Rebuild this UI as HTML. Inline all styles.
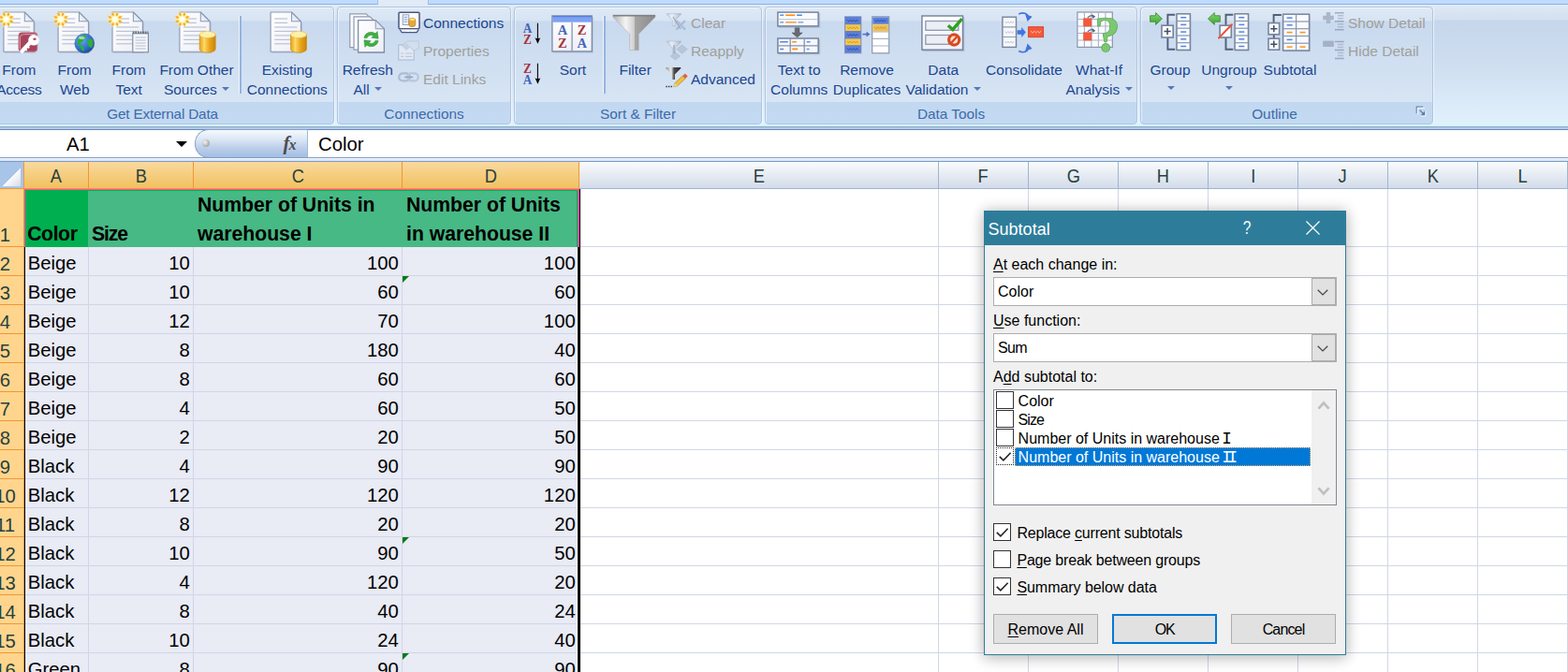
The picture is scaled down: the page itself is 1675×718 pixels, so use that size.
<!DOCTYPE html>
<html lang="en">
<head>
<meta charset="utf-8">
<title>Subtotal</title>
<style>
html,body{margin:0;padding:0;background:#fff;}
body{width:1675px;height:718px;overflow:hidden;font-family:"Liberation Sans",sans-serif;}
#app{position:relative;width:1675px;height:718px;overflow:hidden;background:#fff;}
#app div,#app span,#app i,#app b,#app svg{position:absolute;box-sizing:border-box;}
#app u{text-decoration:underline;text-underline-offset:1.6px;text-decoration-thickness:1px;}
/* ---------- ribbon ---------- */
#tabstrip{left:0;top:0;width:1675px;height:5px;background:#bfdbff;border-bottom:1px solid #8db2e3;}
#tabact{left:403px;top:0;width:55px;height:5px;background:#e1eaf6;border-left:1px solid #9fbde6;border-right:1px solid #9fbde6;}
#ribbon{left:0;top:5px;width:1675px;height:129px;background:linear-gradient(#e0ebf8 0,#dbe6f4 5px,#d4e0f0 16px,#c6d6eb 17px,#cfdef0 65px,#e1f2fd 129px);}
#ribline{left:0;top:134px;width:1675px;height:5px;background:linear-gradient(#c3ffff 0,#c3ffff 1px,#94a8c7 1px,#94a8c7 2px,#afc6e6 2px,#b4caea 4px,#678cb8 4px,#678cb8 5px);}
.grp{top:7px;height:126px;border:1px solid #b0c5e2;border-radius:4px;background:linear-gradient(#dfe9f6 0,#d8e4f3 14px,#c9d9ee 15px,#d7e5f4 101px,#c1d8f0 101px,#c3daf2 124px);box-shadow:inset 1px 1px 0 rgba(255,255,255,.55),1px 0 0 rgba(255,255,255,.6);}
.grp .gl{left:0;right:0;top:103.6px;height:20px;line-height:20px;text-align:center;font-size:15.35px;color:#3e6aaa;white-space:nowrap;}
.rt{font-size:15.5px;color:#1c4690;white-space:nowrap;line-height:21px;text-align:center;}
.rt.dis{color:#a0a09a;}
.tri7{width:0;height:0;border-left:4px solid transparent;border-right:4px solid transparent;border-top:4.5px solid #5878b4;}
.vsep{width:3px;background:linear-gradient(90deg,rgba(255,255,255,.7) 0,rgba(255,255,255,.7) 1px,#8fb0de 1px,#9ab8e2 3px);}
/* ---------- formula bar ---------- */
#fbar{left:0;top:139px;width:1675px;height:29px;background:#fff;}
#fbline{left:0;top:168px;width:1675px;height:5px;background:linear-gradient(#7f9dc6 0,#7f9dc6 1px,#f6f9fe 1px,#f6f9fe 2px,#d9e6f8 2px,#d9e6f8 4px,#7d9bc4 4px);}
.ft{font-size:20.3px;color:#000;line-height:29px;white-space:nowrap;}
/* ---------- grid ---------- */
#grid{left:0;top:0;width:1675px;height:718px;}
.corner{left:0;top:173px;width:26px;height:29px;background:#a9c4e9;border-right:1px solid #f29536;border-bottom:1px solid #f29536;}
.corner i{left:2px;top:6px;width:20px;height:20px;background:linear-gradient(135deg,transparent 50%,#fbfcfe 50%,#d5dbe6 100%);}
.ch{top:173px;height:29px;background:linear-gradient(#f9fcfd,#d3dbe9);border-right:1px solid #9eb6ce;border-bottom:1px solid #9eb6ce;font-size:20.3px;line-height:29px;padding-top:1px;text-align:center;color:#27413e;}
.ch b{position:static !important;display:inline-block;font-weight:normal;transform:scaleX(.9);}
.ch.sel{background:linear-gradient(#f9d99f,#f1c15f);border-right:1px solid #f29536;border-bottom:1px solid #f29536;}
.rh{left:-13px;width:39px;background:#ffd58d;border-right:1px solid #f29536;border-bottom:1px solid #f29536;color:#27413e;font-size:20.3px;}
.rh span{left:0;right:1px;bottom:-2.5px;line-height:29px;text-align:center;}
.vl{top:202px;width:1px;height:516px;background:#d0d7e5;}
.hl{left:619px;width:1056px;height:1px;background:#d0d7e5;}
.selblk{left:27px;top:264px;width:589px;height:454px;background:#e9ebf5;}
.hbase{left:27px;top:203px;width:590px;height:61px;background:#00b050;}
.hc{top:204px;height:60px;background:#47b985;font-weight:bold;font-size:21.2px;color:#000;}
.hc span{left:5px;bottom:-1px;line-height:31px;white-space:nowrap;}
.hc.a1{left:27px;width:67px;background:#00b050;}
.hc.b1{left:94px;width:112px;}
.hc.c1{left:206px;width:223px;}
.hc.d1{left:429px;width:187px;}
.hc.a1 span{letter-spacing:-.4px;left:2.2px;}
.hc.b1 span{letter-spacing:-1.1px;left:4px;}
.svl{top:264px;width:1px;height:454px;background:#d1d6e6;}
.shl{left:27px;width:589px;height:1px;background:#d1d6e6;}
.c{height:31px;line-height:31px;font-size:20.3px;color:#000;white-space:nowrap;padding-top:2px;}
.c.l{text-align:left;padding-left:2.7px;}
.c.r{text-align:right;padding-right:3.2px;}
.tri{left:430px;width:0;height:0;border-right:7.5px solid transparent;border-top:7.5px solid #007a14;}
.selb.l{left:26px;top:202px;width:1px;height:516px;background:linear-gradient(#ff4fa8 0,#ff4fa8 62px,#000 62px);}
.selb.r{left:617px;top:202px;width:2px;height:516px;background:linear-gradient(#ff4fa8 0,#ff4fa8 62px,#000 62px);}
.selb.r2{left:619px;top:202px;width:1px;height:516px;background:#000;}
.selb.t{left:26px;top:202px;width:593px;height:1px;background:#ff4fa8;}
/* ---------- dialog ---------- */
#dlg{left:1051px;top:225px;width:387px;height:475px;background:#f0f0f0;border:1px solid #2d7d9a;box-shadow:0 0 13px 1px rgba(0,0,0,.2),0 5px 16px rgba(0,0,0,.13);font-size:16px;color:#000;}
#dlg .tb{left:0;top:0;width:385px;height:36px;background:#2d7d9a;}
#dlg .tt{left:3.6px;top:6px;font-size:18px;line-height:26px;color:#fff;white-space:nowrap;}
#dlg .lbl{left:9px;line-height:20px;white-space:nowrap;}
#dlg .combo{left:9px;width:367px;height:31px;background:#fff;border:1px solid #adadad;}
#dlg .combo span{left:4px;top:5px;line-height:20px;}
#dlg .combo .btn{right:0;top:0;width:26px;height:29px;background:#e1e1e1;border:1px solid #adadad;}
#dlg .list{left:9px;top:190px;width:367px;height:124px;background:#fff;border:1px solid #828790;}
#dlg .sb{right:0;top:0;width:26px;height:122px;background:#f0f0f0;}
#dlg .cb{width:19px;height:19px;background:#fff;border:1px solid #333;}
#dlg .li{left:25.6px;line-height:20px;height:20px;white-space:nowrap;}
#dlg .ck{left:34.4px;line-height:20px;white-space:nowrap;}
#dlg .bt{top:430px;width:112px;height:32px;background:#e1e1e1;border:1px solid #adadad;text-align:center;line-height:31.6px;}
.rt.lb{top:64px;width:200px;}
.rt.sm{text-align:left;}
#app .tri7.in{position:relative;display:inline-block;top:-4px;margin-left:1px;}
#dlg .q{left:273.2px;top:4.4px;width:14px;text-align:center;font-size:20.5px;line-height:26px;color:#f4f8fa;transform:scaleX(.76);}
#dlg .selrow{left:22px;top:61px;width:316px;height:20px;background:#0078d7;border:1px dotted #f0b060;}
#dlg .cb.foc{border:1px dotted #222;}
#dlg .bt.ok{border:2px solid #0078d7;line-height:29.6px;}
.rt em{font-style:normal;letter-spacing:-.3px;}
#dlg .si{font-style:normal;font-family:'Liberation Mono',monospace;font-size:17.6px;line-height:1px;letter-spacing:-4.2px;margin-left:-2px;}

</style>
</head>
<body>
<div id="app">
<div id="tabstrip"></div>
<div id="tabact"></div>
<div id="ribbon"></div>
<div id="ribline"></div>
<div class="grp" style="left:-20px;width:377px"><div class="gl" style="left:20px;right:10px;letter-spacing:-.2px">Get External Data</div></div>
<div class="grp" style="left:360px;width:186px"><div class="gl">Connections</div></div>
<div class="grp" style="left:549px;width:265px"><div class="gl">Sort &amp; Filter</div></div>
<div class="grp" style="left:817px;width:398px"><div class="gl">Data Tools</div></div>
<div class="grp" style="left:1218px;width:313px"><div class="gl" style="right:26px">Outline</div></div>
<!-- large button labels -->
<div class="rt lb" style="left:-79.6px">From<br><em>Access</em></div>
<div class="rt lb" style="left:-20.3px">From<br>Web</div>
<div class="rt lb" style="left:37.7px">From<br>Text</div>
<div class="rt lb" style="left:110px">From Other<br>Sources <i class="tri7 in"></i></div>
<div class="rt lb" style="left:206.8px">Existing<br>Connections</div>
<div class="rt lb" style="left:292.8px">Refresh<br>All <i class="tri7 in"></i></div>
<div class="rt lb" style="left:511.9px">Sort</div>
<div class="rt lb" style="left:578.7px">Filter</div>
<div class="rt lb" style="left:753.7px">Text to<br>Columns</div>
<div class="rt lb" style="left:826px">Remove<br>Duplicates</div>
<div class="rt lb" style="left:907.7px">Data<br>Validation <i class="tri7 in"></i></div>
<div class="rt lb" style="left:994px">Consolidate</div>
<div class="rt lb" style="left:1074px">What-If<br>Analysis <i class="tri7 in"></i></div>
<div class="rt lb" style="left:1150px">Group</div>
<div class="rt lb" style="left:1213px">Ungroup</div>
<div class="rt lb" style="left:1278px">Subtotal</div>
<i class="tri7" style="left:1246.6px;top:91.6px"></i>
<i class="tri7" style="left:1308.6px;top:91.6px"></i>
<!-- small button labels -->
<div class="rt sm" style="left:452px;top:14px">Connections</div>
<div class="rt sm dis" style="left:452px;top:44px">Properties</div>
<div class="rt sm dis" style="left:452px;top:74px">Edit Links</div>
<div class="rt sm dis" style="left:738px;top:14px">Clear</div>
<div class="rt sm dis" style="left:738px;top:44px">Reapply</div>
<div class="rt sm" style="left:738px;top:74px">Advanced</div>
<div class="rt sm dis" style="left:1440px;top:14px">Show Detail</div>
<div class="rt sm dis" style="left:1440px;top:44px">Hide Detail</div>
<div class="vsep" style="left:255px;top:17px;height:83px"></div>
<div class="vsep" style="left:644px;top:17px;height:83px"></div>

<svg id="icons" width="1675" height="139" viewBox="0 0 1675 139" style="left:0;top:0">
<defs>
<linearGradient id="gdoc" x1="0" y1="0" x2="1" y2="1"><stop offset="0" stop-color="#ffffff"/><stop offset="1" stop-color="#ebeef6"/></linearGradient>
<linearGradient id="gfold" x1="0" y1="1" x2="1" y2="0"><stop offset="0" stop-color="#f4f8fd"/><stop offset="1" stop-color="#c3d4ee"/></linearGradient>
<linearGradient id="gcell" x1="0" y1="0" x2="0" y2="1"><stop offset="0" stop-color="#ffffff"/><stop offset="1" stop-color="#eef0f6"/></linearGradient>
<radialGradient id="gstar2"><stop offset="0" stop-color="#ffffff"/><stop offset=".4" stop-color="#fff4a0"/><stop offset="1" stop-color="#ffdf70"/></radialGradient>
<radialGradient id="gstar"><stop offset="0" stop-color="#ffffe8"/><stop offset=".5" stop-color="#fff29a" stop-opacity=".8"/><stop offset="1" stop-color="#ffe680" stop-opacity="0"/></radialGradient>
<linearGradient id="gcyl" x1="0" y1="0" x2="1" y2="0"><stop offset="0" stop-color="#e9a21a"/><stop offset=".3" stop-color="#fbd860"/><stop offset=".6" stop-color="#eaa820"/><stop offset="1" stop-color="#c98408"/></linearGradient>
<radialGradient id="gglobe" cx=".35" cy=".3" r=".8"><stop offset="0" stop-color="#6fa8f0"/><stop offset=".6" stop-color="#2f6fd0"/><stop offset="1" stop-color="#1f3f8a"/></radialGradient>
<linearGradient id="ggrn" x1="0" y1="0" x2="0" y2="1"><stop offset="0" stop-color="#8ad678"/><stop offset=".5" stop-color="#5fbf50"/><stop offset="1" stop-color="#3f9f38"/></linearGradient>
<linearGradient id="gfun" x1="0" y1="0" x2="1" y2="0"><stop offset="0" stop-color="#b4b4b4"/><stop offset=".3" stop-color="#f4f4f4"/><stop offset=".5" stop-color="#cfcfcf"/><stop offset=".52" stop-color="#a6a6a6"/><stop offset="1" stop-color="#8a8a8a"/></linearGradient>
<linearGradient id="gfunl" x1="0" y1="0" x2="1" y2="0"><stop offset="0" stop-color="#b8c6da"/><stop offset=".35" stop-color="#eef3fa"/><stop offset="1" stop-color="#9fb0c8"/></linearGradient>
<linearGradient id="gfund" x1="0" y1="0" x2="1" y2="0"><stop offset="0" stop-color="#8c8c8c"/><stop offset=".35" stop-color="#f0f0f0"/><stop offset=".55" stop-color="#4a4a4a"/><stop offset="1" stop-color="#2a2a2a"/></linearGradient>
</defs>
<g transform="translate(3.3,12.4)"><path d="M1.5,1.8 H24 L34.6,12 V44.6 H1.5 Z" fill="#5b6b88" opacity=".18"/><path d="M.6,.6 H23 L33,10.4 V42.8 H.6 Z" fill="url(#gdoc)" stroke="#8e99b1" stroke-width="1.15" stroke-linejoin="round"/><path d="M23,.8 V10.4 H32.8 Z" fill="url(#gfold)" stroke="#8e99b1" stroke-width="1.05" stroke-linejoin="round"/><path d="M4.8,7.6 H18.6" stroke="#bcc2d3" stroke-width="1.2"/><path d="M4.8,12 H18.6" stroke="#bcc2d3" stroke-width="1.2"/><path d="M4.8,16.6 H28.8" stroke="#bcc2d3" stroke-width="1.2"/><path d="M4.8,21 H28.8" stroke="#bcc2d3" stroke-width="1.2"/><path d="M4.8,25.5 H28.8" stroke="#bcc2d3" stroke-width="1.2"/><path d="M4.8,30 H28.8" stroke="#bcc2d3" stroke-width="1.2"/><path d="M4.8,34.4 H28.8" stroke="#bcc2d3" stroke-width="1.2"/></g><g transform="translate(6.699999999999999,20.6)"><circle r="8.6" fill="url(#gstar)"/><polygon points="3.75,-9.05 3.25,-3.25 9.05,-3.75 4.60,-0.00 9.05,3.75 3.25,3.25 3.75,9.05 0.00,4.60 -3.75,9.05 -3.25,3.25 -9.05,3.75 -4.60,0.00 -9.05,-3.75 -3.25,-3.25 -3.75,-9.05 -0.00,-4.60" fill="url(#gstar2)"/><path d="M0,-3.6 L1.35,-5.6 L0,-8 L-1.35,-5.6 Z" fill="#f0a020" opacity=".9" transform="rotate(22.5)"/><path d="M0,-3.6 L1.35,-5.6 L0,-8 L-1.35,-5.6 Z" fill="#f0a020" opacity=".9" transform="rotate(67.5)"/><path d="M0,-3.6 L1.35,-5.6 L0,-8 L-1.35,-5.6 Z" fill="#f0a020" opacity=".9" transform="rotate(112.5)"/><path d="M0,-3.6 L1.35,-5.6 L0,-8 L-1.35,-5.6 Z" fill="#f0a020" opacity=".9" transform="rotate(157.5)"/><path d="M0,-3.6 L1.35,-5.6 L0,-8 L-1.35,-5.6 Z" fill="#f0a020" opacity=".9" transform="rotate(202.5)"/><path d="M0,-3.6 L1.35,-5.6 L0,-8 L-1.35,-5.6 Z" fill="#f0a020" opacity=".9" transform="rotate(247.5)"/><path d="M0,-3.6 L1.35,-5.6 L0,-8 L-1.35,-5.6 Z" fill="#f0a020" opacity=".9" transform="rotate(292.5)"/><path d="M0,-3.6 L1.35,-5.6 L0,-8 L-1.35,-5.6 Z" fill="#f0a020" opacity=".9" transform="rotate(337.5)"/><circle r="2.8" fill="#fffef0" opacity=".95"/></g>
<g transform="translate(19.4,34.2)"><rect x=".5" y=".5" width="20" height="20.5" rx="3" fill="#a8425b" stroke="#c98a9a" stroke-width=".8"/><path d="M2,18 V6 Q2,2.5 6,2.5 H19" fill="none" stroke="#d8a0ae" stroke-width="1"/><path d="M4,20.5 L13.5,10.5" stroke="#fff" stroke-width="4.2" stroke-linecap="round"/><path d="M7,17.5 l2.3,2.3 M9.6,15 l2.2,2.2" stroke="#fff" stroke-width="1.8"/><circle cx="16.6" cy="8.6" r="5.8" fill="#fff"/><ellipse cx="17.6" cy="7.6" rx="1.7" ry="1.2" fill="#b04a62"/></g>
<g transform="translate(61.5,12.4)"><path d="M1.5,1.8 H24 L34.6,12 V44.6 H1.5 Z" fill="#5b6b88" opacity=".18"/><path d="M.6,.6 H23 L33,10.4 V42.8 H.6 Z" fill="url(#gdoc)" stroke="#8e99b1" stroke-width="1.15" stroke-linejoin="round"/><path d="M23,.8 V10.4 H32.8 Z" fill="url(#gfold)" stroke="#8e99b1" stroke-width="1.05" stroke-linejoin="round"/><path d="M4.8,7.6 H18.6" stroke="#bcc2d3" stroke-width="1.2"/><path d="M4.8,12 H18.6" stroke="#bcc2d3" stroke-width="1.2"/><path d="M4.8,16.6 H28.8" stroke="#bcc2d3" stroke-width="1.2"/><path d="M4.8,21 H28.8" stroke="#bcc2d3" stroke-width="1.2"/><path d="M4.8,25.5 H28.8" stroke="#bcc2d3" stroke-width="1.2"/><path d="M4.8,30 H28.8" stroke="#bcc2d3" stroke-width="1.2"/><path d="M4.8,34.4 H28.8" stroke="#bcc2d3" stroke-width="1.2"/></g><g transform="translate(64.9,20.6)"><circle r="8.6" fill="url(#gstar)"/><polygon points="3.75,-9.05 3.25,-3.25 9.05,-3.75 4.60,-0.00 9.05,3.75 3.25,3.25 3.75,9.05 0.00,4.60 -3.75,9.05 -3.25,3.25 -9.05,3.75 -4.60,0.00 -9.05,-3.75 -3.25,-3.25 -3.75,-9.05 -0.00,-4.60" fill="url(#gstar2)"/><path d="M0,-3.6 L1.35,-5.6 L0,-8 L-1.35,-5.6 Z" fill="#f0a020" opacity=".9" transform="rotate(22.5)"/><path d="M0,-3.6 L1.35,-5.6 L0,-8 L-1.35,-5.6 Z" fill="#f0a020" opacity=".9" transform="rotate(67.5)"/><path d="M0,-3.6 L1.35,-5.6 L0,-8 L-1.35,-5.6 Z" fill="#f0a020" opacity=".9" transform="rotate(112.5)"/><path d="M0,-3.6 L1.35,-5.6 L0,-8 L-1.35,-5.6 Z" fill="#f0a020" opacity=".9" transform="rotate(157.5)"/><path d="M0,-3.6 L1.35,-5.6 L0,-8 L-1.35,-5.6 Z" fill="#f0a020" opacity=".9" transform="rotate(202.5)"/><path d="M0,-3.6 L1.35,-5.6 L0,-8 L-1.35,-5.6 Z" fill="#f0a020" opacity=".9" transform="rotate(247.5)"/><path d="M0,-3.6 L1.35,-5.6 L0,-8 L-1.35,-5.6 Z" fill="#f0a020" opacity=".9" transform="rotate(292.5)"/><path d="M0,-3.6 L1.35,-5.6 L0,-8 L-1.35,-5.6 Z" fill="#f0a020" opacity=".9" transform="rotate(337.5)"/><circle r="2.8" fill="#fffef0" opacity=".95"/></g>
<g transform="translate(90.3,46.4)"><circle r="10.4" fill="url(#gglobe)" stroke="#3a5a9a" stroke-width=".6"/><path d="M-7,-5 Q-4,-9 1,-9.5 Q3,-7 0,-5 Q-1,-2 -4,-1 Q-5,2 -2,3 Q1,5 -1,8.5 Q-4,7 -5,3 Q-9,1 -7,-5 Z" fill="#2fae3a"/><path d="M3,-3 Q6,-6 8.5,-4 Q10,0 8,4 Q5,5 4,2 Q2,0 3,-3 Z" fill="#2fae3a"/><ellipse cx="-3" cy="-6" rx="3.2" ry="1.6" fill="#fff" opacity=".55"/></g>
<g transform="translate(119.4,12.4)"><path d="M1.5,1.8 H24 L34.6,12 V44.6 H1.5 Z" fill="#5b6b88" opacity=".18"/><path d="M.6,.6 H23 L33,10.4 V42.8 H.6 Z" fill="url(#gdoc)" stroke="#8e99b1" stroke-width="1.15" stroke-linejoin="round"/><path d="M23,.8 V10.4 H32.8 Z" fill="url(#gfold)" stroke="#8e99b1" stroke-width="1.05" stroke-linejoin="round"/><path d="M4.8,7.6 H18.6" stroke="#bcc2d3" stroke-width="1.2"/><path d="M4.8,12 H18.6" stroke="#bcc2d3" stroke-width="1.2"/><path d="M4.8,16.6 H28.8" stroke="#bcc2d3" stroke-width="1.2"/><path d="M4.8,21 H28.8" stroke="#bcc2d3" stroke-width="1.2"/><path d="M4.8,25.5 H28.8" stroke="#bcc2d3" stroke-width="1.2"/><path d="M4.8,30 H28.8" stroke="#bcc2d3" stroke-width="1.2"/><path d="M4.8,34.4 H28.8" stroke="#bcc2d3" stroke-width="1.2"/></g><g transform="translate(122.80000000000001,20.6)"><circle r="8.6" fill="url(#gstar)"/><polygon points="3.75,-9.05 3.25,-3.25 9.05,-3.75 4.60,-0.00 9.05,3.75 3.25,3.25 3.75,9.05 0.00,4.60 -3.75,9.05 -3.25,3.25 -9.05,3.75 -4.60,0.00 -9.05,-3.75 -3.25,-3.25 -3.75,-9.05 -0.00,-4.60" fill="url(#gstar2)"/><path d="M0,-3.6 L1.35,-5.6 L0,-8 L-1.35,-5.6 Z" fill="#f0a020" opacity=".9" transform="rotate(22.5)"/><path d="M0,-3.6 L1.35,-5.6 L0,-8 L-1.35,-5.6 Z" fill="#f0a020" opacity=".9" transform="rotate(67.5)"/><path d="M0,-3.6 L1.35,-5.6 L0,-8 L-1.35,-5.6 Z" fill="#f0a020" opacity=".9" transform="rotate(112.5)"/><path d="M0,-3.6 L1.35,-5.6 L0,-8 L-1.35,-5.6 Z" fill="#f0a020" opacity=".9" transform="rotate(157.5)"/><path d="M0,-3.6 L1.35,-5.6 L0,-8 L-1.35,-5.6 Z" fill="#f0a020" opacity=".9" transform="rotate(202.5)"/><path d="M0,-3.6 L1.35,-5.6 L0,-8 L-1.35,-5.6 Z" fill="#f0a020" opacity=".9" transform="rotate(247.5)"/><path d="M0,-3.6 L1.35,-5.6 L0,-8 L-1.35,-5.6 Z" fill="#f0a020" opacity=".9" transform="rotate(292.5)"/><path d="M0,-3.6 L1.35,-5.6 L0,-8 L-1.35,-5.6 Z" fill="#f0a020" opacity=".9" transform="rotate(337.5)"/><circle r="2.8" fill="#fffef0" opacity=".95"/></g>
<g transform="translate(141.2,33)"><rect x=".6" y="2.8" width="16.6" height="20" fill="#f6f8fc" stroke="#8390a8" stroke-width="1.2"/><path d="M.6,1.6 H17.2" stroke="#5d6678" stroke-width="2.2" stroke-dasharray="1.6 1"/><path d="M3.4,7 H14.6" stroke="#b3bacb" stroke-width="1"/><path d="M3.4,10 H14.6" stroke="#b3bacb" stroke-width="1"/><path d="M3.4,13 H14.6" stroke="#b3bacb" stroke-width="1"/><path d="M3.4,16 H14.6" stroke="#b3bacb" stroke-width="1"/><path d="M3.4,19 H14.6" stroke="#b3bacb" stroke-width="1"/></g>
<g transform="translate(191.3,12.4)"><path d="M1.5,1.8 H24 L34.6,12 V44.6 H1.5 Z" fill="#5b6b88" opacity=".18"/><path d="M.6,.6 H23 L33,10.4 V42.8 H.6 Z" fill="url(#gdoc)" stroke="#8e99b1" stroke-width="1.15" stroke-linejoin="round"/><path d="M23,.8 V10.4 H32.8 Z" fill="url(#gfold)" stroke="#8e99b1" stroke-width="1.05" stroke-linejoin="round"/><path d="M4.8,7.6 H18.6" stroke="#bcc2d3" stroke-width="1.2"/><path d="M4.8,12 H18.6" stroke="#bcc2d3" stroke-width="1.2"/><path d="M4.8,16.6 H28.8" stroke="#bcc2d3" stroke-width="1.2"/><path d="M4.8,21 H28.8" stroke="#bcc2d3" stroke-width="1.2"/><path d="M4.8,25.5 H28.8" stroke="#bcc2d3" stroke-width="1.2"/><path d="M4.8,30 H28.8" stroke="#bcc2d3" stroke-width="1.2"/><path d="M4.8,34.4 H28.8" stroke="#bcc2d3" stroke-width="1.2"/></g><g transform="translate(194.70000000000002,20.6)"><circle r="8.6" fill="url(#gstar)"/><polygon points="3.75,-9.05 3.25,-3.25 9.05,-3.75 4.60,-0.00 9.05,3.75 3.25,3.25 3.75,9.05 0.00,4.60 -3.75,9.05 -3.25,3.25 -9.05,3.75 -4.60,0.00 -9.05,-3.75 -3.25,-3.25 -3.75,-9.05 -0.00,-4.60" fill="url(#gstar2)"/><path d="M0,-3.6 L1.35,-5.6 L0,-8 L-1.35,-5.6 Z" fill="#f0a020" opacity=".9" transform="rotate(22.5)"/><path d="M0,-3.6 L1.35,-5.6 L0,-8 L-1.35,-5.6 Z" fill="#f0a020" opacity=".9" transform="rotate(67.5)"/><path d="M0,-3.6 L1.35,-5.6 L0,-8 L-1.35,-5.6 Z" fill="#f0a020" opacity=".9" transform="rotate(112.5)"/><path d="M0,-3.6 L1.35,-5.6 L0,-8 L-1.35,-5.6 Z" fill="#f0a020" opacity=".9" transform="rotate(157.5)"/><path d="M0,-3.6 L1.35,-5.6 L0,-8 L-1.35,-5.6 Z" fill="#f0a020" opacity=".9" transform="rotate(202.5)"/><path d="M0,-3.6 L1.35,-5.6 L0,-8 L-1.35,-5.6 Z" fill="#f0a020" opacity=".9" transform="rotate(247.5)"/><path d="M0,-3.6 L1.35,-5.6 L0,-8 L-1.35,-5.6 Z" fill="#f0a020" opacity=".9" transform="rotate(292.5)"/><path d="M0,-3.6 L1.35,-5.6 L0,-8 L-1.35,-5.6 Z" fill="#f0a020" opacity=".9" transform="rotate(337.5)"/><circle r="2.8" fill="#fffef0" opacity=".95"/></g>
<g transform="translate(212.9,33)"><path d="M.3,4 V19.6 A8.5,3.6 0 0 0 17.3,19.6 V4 Z" fill="url(#gcyl)" stroke="#c98a0c" stroke-width=".6"/><ellipse cx="8.8" cy="4" rx="8.5" ry="3.6" fill="#fdf0a8" stroke="#e9b73a" stroke-width=".6"/><path d="M5,7.5 V22" stroke="#ffe79a" stroke-width="1" stroke-dasharray="1 1" opacity=".8"/></g>
<g transform="translate(288.5,12.4)"><path d="M1.5,1.8 H24 L34.6,12 V44.6 H1.5 Z" fill="#5b6b88" opacity=".18"/><path d="M.6,.6 H23 L33,10.4 V42.8 H.6 Z" fill="url(#gdoc)" stroke="#8e99b1" stroke-width="1.15" stroke-linejoin="round"/><path d="M23,.8 V10.4 H32.8 Z" fill="url(#gfold)" stroke="#8e99b1" stroke-width="1.05" stroke-linejoin="round"/><path d="M4.8,7.6 H18.6" stroke="#bcc2d3" stroke-width="1.2"/><path d="M4.8,12 H18.6" stroke="#bcc2d3" stroke-width="1.2"/><path d="M4.8,16.6 H28.8" stroke="#bcc2d3" stroke-width="1.2"/><path d="M4.8,21 H28.8" stroke="#bcc2d3" stroke-width="1.2"/><path d="M4.8,25.5 H28.8" stroke="#bcc2d3" stroke-width="1.2"/><path d="M4.8,30 H28.8" stroke="#bcc2d3" stroke-width="1.2"/><path d="M4.8,34.4 H28.8" stroke="#bcc2d3" stroke-width="1.2"/></g>
<g transform="translate(310.2,33)"><path d="M.3,4 V19.6 A8.5,3.6 0 0 0 17.3,19.6 V4 Z" fill="url(#gcyl)" stroke="#c98a0c" stroke-width=".6"/><ellipse cx="8.8" cy="4" rx="8.5" ry="3.6" fill="#fdf0a8" stroke="#e9b73a" stroke-width=".6"/><path d="M5,7.5 V22" stroke="#ffe79a" stroke-width="1" stroke-dasharray="1 1" opacity=".8"/></g>
<g transform="translate(373.2,14.2)"><path d="M.6,.6 H18 L24,7 V36.4 H.6 Z" fill="#fafbfe" stroke="#8f9ab2" stroke-width="1.2"/><path d="M4.8,3.6 H22 L30,11 V39 H4.8 Z" fill="#fafbfe" stroke="#8f9ab2" stroke-width="1.2"/><path d="M9.4,7.4 H28 L37.2,16.6 V41.8 H9.4 Z" fill="url(#gdoc)" stroke="#7f8ba4" stroke-width="1.3"/><path d="M28,7.6 V16.6 H37 Z" fill="#dfe8f6" stroke="#8f9ab2" stroke-width="1"/><g transform="translate(23.3,27.6)"><path d="M-7.6,-1.2 A7.6,7.2 0 0 1 4.6,-6 L6.6,-8.2 L7.6,-.6 L.4,-1.6 L2.4,-3.6 A4.6,4.4 0 0 0 -4.4,-1.2 Z" fill="#3fae3f" stroke="#2b8f2e" stroke-width=".5"/><path d="M7.6,1.6 A7.6,7.2 0 0 1 -4.6,6.4 L-6.6,8.6 L-7.6,1 L-.4,2 L-2.4,4 A4.6,4.4 0 0 0 4.4,1.6 Z" fill="#3fae3f" stroke="#2b8f2e" stroke-width=".5"/></g></g>
<g transform="translate(425.2,12.4)"><rect x=".8" y=".8" width="22" height="17.6" rx="1" fill="#fbfcfe" stroke="#4a5680" stroke-width="1.5"/><path d="M2,19.2 L4,22.2 H20 L22,19.2" fill="#e8ecf4" stroke="#4a5680" stroke-width="1.2"/><path d="M9,21 h3 M14,21 h3" stroke="#fff" stroke-width="1.2"/><rect x="5" y="3.4" width="6.6" height="10.6" fill="#eef2fa" stroke="#7d8cb0" stroke-width=".8"/><path d="M6.4,6 h3.6 M6.4,8.4 h3.6 M6.4,10.8 h3.6" stroke="#6f8fd0" stroke-width=".8"/><rect x="11.6" y="7" width="7" height="9" rx="2.4" fill="#e8a838" stroke="#b9781a" stroke-width=".7"/><ellipse cx="15.1" cy="8.4" rx="3" ry="1.2" fill="#fbe08a"/></g>
<g transform="translate(425.2,43)" opacity=".85"><rect x=".6" y="5" width="16.4" height="16" fill="#e6ecf5" stroke="#a9b7cd" stroke-width="1.1"/><path d="M3,14 h3 M8,14 h7 M3,17.4 h3 M8,17.4 h7" stroke="#b7c3d6" stroke-width="1.1"/><path d="M4,6 L10,1 H22 V9 L17,11 L10,5 Z" fill="#d5dfee" stroke="#b3c0d6" stroke-width=".8"/><path d="M5,7 l4,-4 l4,4 l-4,4 z" fill="#c4d0e4"/></g>
<g transform="translate(425.2,77)" opacity=".9"><rect x="1" y="1.4" width="11.6" height="8" rx="4" fill="none" stroke="#aab8cf" stroke-width="2.2"/><rect x="10" y="1.4" width="11.6" height="8" rx="4" fill="none" stroke="#b7c4d8" stroke-width="2.2"/><path d="M7,5.4 h9" stroke="#8fa0bd" stroke-width="1.6"/></g>
<g transform="translate(558.8,24.8)"><text transform="translate(4.7,9.9) scale(1,1.14)" font-family="Liberation Serif,serif" font-weight="bold" font-size="13.2" text-anchor="middle" fill="#4564b8">A</text><text transform="translate(4.7,22) scale(1,1.14)" font-family="Liberation Serif,serif" font-weight="bold" font-size="13.2" text-anchor="middle" fill="#a5323c">Z</text><path d="M15.6,0 V18" stroke="#000" stroke-width="1.1"/><path d="M12.7,15.4 L15.6,22 L18.5,15.4 Q15.6,17.2 12.7,15.4 Z" fill="#000"/></g>
<g transform="translate(558.8,67.8)"><text transform="translate(4.7,9.9) scale(1,1.14)" font-family="Liberation Serif,serif" font-weight="bold" font-size="13.2" text-anchor="middle" fill="#a5323c">Z</text><text transform="translate(4.7,22) scale(1,1.14)" font-family="Liberation Serif,serif" font-weight="bold" font-size="13.2" text-anchor="middle" fill="#4564b8">A</text><path d="M15.6,0 V18" stroke="#000" stroke-width="1.1"/><path d="M12.7,15.4 L15.6,22 L18.5,15.4 Q15.6,17.2 12.7,15.4 Z" fill="#000"/></g>
<g transform="translate(589.3,16.3)"><rect x="1.4" y="1.8" width="43" height="38.4" fill="#5d6b86" opacity=".25"/><rect x=".6" y=".6" width="42.4" height="38" fill="url(#gcell)" stroke="#7b89a6" stroke-width="1.3"/><rect x="1" y="1" width="41.6" height="6.4" fill="#7ea2f2"/><path d="M1,1.4 H42.6" stroke="#4d74d6" stroke-width="1"/><path d="M21.8,7.6 V38.4" stroke="#8d9ab4" stroke-width="1.4"/><text x="11.6" y="20.8" font-family="Liberation Serif,serif" font-weight="bold" font-size="14.5" text-anchor="middle" fill="#4564b8">A</text><text x="11.6" y="34.6" font-family="Liberation Serif,serif" font-weight="bold" font-size="14.5" text-anchor="middle" fill="#a5323c">Z</text><text x="32.4" y="20.8" font-family="Liberation Serif,serif" font-weight="bold" font-size="14.5" text-anchor="middle" fill="#a5323c">Z</text><text x="32.4" y="34.6" font-family="Liberation Serif,serif" font-weight="bold" font-size="14.5" text-anchor="middle" fill="#4564b8">A</text></g>
<g transform="translate(654.9,16)"><path d="M0,0 H45 V2.3 L27.3,20.3 V37.6 H17.7 V20.3 L0,2.3 Z" fill="url(#gfun)" stroke="#8a8a8a" stroke-opacity=".55" stroke-width=".6"/><path d="M0,.8 H45" stroke="#808080" stroke-width="1.6"/></g>
<g transform="translate(712.4,14.6)" opacity=".8"><path d="M0,0 H15 V0.8 L9.0,7.0 V13 H6.0 V7.0 L0,0.8 Z" fill="url(#gfunl)" stroke="#8a8a8a" stroke-opacity=".55" stroke-width=".6"/></g>
<g opacity=".8"><path d="M722.4,22 l9.6,9.6 M732,22 l-9.6,9.6" stroke="#a7b7ce" stroke-width="2.4"/><path d="M719,18 l8,13" stroke="#8fa2be" stroke-width="1.4"/></g>
<g transform="translate(712.4,44)" opacity=".8"><path d="M0,0 H15 V0.8 L9.0,7.0 V13 H6.0 V7.0 L0,0.8 Z" fill="url(#gfunl)" stroke="#8a8a8a" stroke-opacity=".55" stroke-width=".6"/></g>
<g opacity=".85"><path d="M723,52.6 l5.6,-4.6 l5.6,4.6 l-5.6,4.6 z M716.4,60 l5,-4 l5,4 l-5,4 z" fill="#b3c2d8" stroke="#9db0ca" stroke-width=".6"/><path d="M720,48 v9" stroke="#94a6c2" stroke-width="1.6"/></g>
<g transform="translate(711.3,72.1)"><path d="M0,0 H16 V.8 L9.6,7.4 V13 H6.4 V7.4 L0,.8 Z" fill="url(#gfund)"/><path d="M0,20.4 h7" stroke="#333" stroke-width="1.4" stroke-dasharray="1.4 1.2"/><g transform="translate(8.4,20.6) rotate(-43)"><path d="M0,0 L3.4,-2 H15 V2 H3.4 Z" fill="#f2c140" stroke="#a87b1a" stroke-width=".6"/><path d="M0,0 L3.4,-2 V2 Z" fill="#e9d7b0"/><rect x="15" y="-2" width="3.6" height="4" fill="#e0603a"/></g></g>
<g transform="translate(830.2,12.4)"><rect x="1.6" y="1.8" width="44.4" height="15.6" fill="#5d6b86" opacity=".25"/><rect x=".7" y=".7" width="43.2" height="14.8" fill="#fafbfe" stroke="#6e7c96" stroke-width="1.4"/><path d="M1.4,8.2 H43.2" stroke="#c3cad8" stroke-width="1.2"/><path d="M3,3.8 h4" stroke="#3d8bf0" stroke-width="1.4"/><path d="M9,3.8 h10" stroke="#ff8a00" stroke-width="1.5"/><path d="M21,3.8 h5.6" stroke="#3d7be0" stroke-width="1.4"/><path d="M3,11.4 h4" stroke="#6f9cf2" stroke-width="1.5"/><path d="M9,11.4 h11.6" stroke="#f5a04a" stroke-width="1.6"/><path d="M22.4,11.4 h5.6" stroke="#7ea4f2" stroke-width="1.5"/><path d="M19,17.4 H23.8 V22.6 H27 L21.4,27.6 L15.8,22.6 H19 Z" fill="#666b72" stroke="#4c5058" stroke-width=".5"/><rect x="1.6" y="29.6" width="44.4" height="16.4" fill="#5d6b86" opacity=".25"/><rect x=".7" y="28.6" width="43.2" height="15.6" fill="#f6f8fc" stroke="#6e7c96" stroke-width="1.4"/><path d="M1,36.4 H43.6 M14,29 V44 M29,29 V44" stroke="#8693ac" stroke-width="1.3"/><path d="M3,32.4 h8.6 M3,40 h4" stroke="#4f86ee" stroke-width="1.5"/><path d="M16,32.4 h4.6 M16,40 h6" stroke="#ff8f10" stroke-width="1.6"/><path d="M31.4,32.4 h4 M31.4,40 h3" stroke="#5a94f0" stroke-width="1.5"/></g>
<g transform="translate(902.1,17.4)"><rect x=".4" y=".4" width="17.4" height="39" fill="#6a7fc0" stroke="#7a8cc0" stroke-width=".8"/><rect x="1" y="1.2" width="16.2" height="6.8" fill="#5b7fd6"/><path d="M3,3.8 l1.7,2 l1.7,-2 l1.7,2 l1.7,-2 l1.7,2 l1.7,-2 l1.5,2" fill="none" stroke="#2f4fae" stroke-width="1"/><rect x="1" y="8.8" width="16.2" height="6.8" fill="#f3c84e"/><path d="M3,11.4 l1.7,2 l1.7,-2 l1.7,2 l1.7,-2 l1.7,2 l1.7,-2 l1.5,2" fill="none" stroke="#d99a1c" stroke-width="1"/><rect x="1" y="16.4" width="16.2" height="6.8" fill="#5b7fd6"/><path d="M3,19.0 l1.7,2 l1.7,-2 l1.7,2 l1.7,-2 l1.7,2 l1.7,-2 l1.5,2" fill="none" stroke="#2f4fae" stroke-width="1"/><rect x="1" y="24.0" width="16.2" height="6.8" fill="#f3c84e"/><path d="M3,26.6 l1.7,2 l1.7,-2 l1.7,2 l1.7,-2 l1.7,2 l1.7,-2 l1.5,2" fill="none" stroke="#d99a1c" stroke-width="1"/><rect x="1" y="31.6" width="16.2" height="6.8" fill="#5b7fd6"/><path d="M3,34.2 l1.7,2 l1.7,-2 l1.7,2 l1.7,-2 l1.7,2 l1.7,-2 l1.5,2" fill="none" stroke="#2f4fae" stroke-width="1"/><path d="M19.4,19.2 H25" stroke="#4a6fc8" stroke-width="1.6"/><path d="M23.4,16.4 L27.4,19.2 L23.4,22 Z" fill="#4a6fc8"/><rect x="29.6" y=".4" width="18" height="39" fill="#fff" stroke="#8c98b2" stroke-width="1.2"/><rect x="30.2" y="1" width="16.8" height="7.4" fill="#5b7fd6"/><path d="M32.4,3.8 l1.7,2 l1.7,-2 l1.7,2 l1.7,-2 l1.7,2 l1.7,-2 l1.5,2" fill="none" stroke="#2f4fae" stroke-width="1"/><rect x="30.2" y="8.8" width="16.8" height="7.4" fill="#f0bf52"/><path d="M32.4,11.4 l1.7,2 l1.7,-2 l1.7,2 l1.7,-2 l1.7,2 l1.7,-2 l1.5,2" fill="none" stroke="#d99a1c" stroke-width="1"/><path d="M30,16.6 H47.4 M30,24 H47.4 M30,31.6 H47.4" stroke="#a9b2c6" stroke-width="1.2"/></g>
<g transform="translate(984.2,16.3)"><rect x="1.6" y="1.8" width="44.6" height="37" fill="#5d6b86" opacity=".25"/><rect x=".7" y=".7" width="43.6" height="36.2" fill="url(#gcell)" stroke="#70809a" stroke-width="1.4"/><rect x="4.6" y="6.2" width="35" height="9.8" fill="#eceef6" stroke="#8c98b0" stroke-width="1.3"/><rect x="4.6" y="21.2" width="25" height="9.8" fill="#eceef6" stroke="#8c98b0" stroke-width="1.3"/><path d="M28.6,11 L33.6,15.4 L43.4,3.8" fill="none" stroke="#2fa020" stroke-width="3.4" stroke-linejoin="miter"/><circle cx="35" cy="26.2" r="6.8" fill="#dc4a1e" stroke="#c23a10" stroke-width=".6"/><circle cx="35" cy="26.2" r="3.9" fill="#fbe4da"/><path d="M32,29.4 L38,23" stroke="#dc4a1e" stroke-width="2.4"/></g>
<g transform="translate(1070.2,17.5)"><rect x=".7" y=".7" width="14.6" height="32.2" fill="#f7f8fb" stroke="#76839c" stroke-width="1.4"/><path d="M1,11.4 H15 M1,22 H15" stroke="#8f9bb2" stroke-width="1.2"/><path d="M3.4,5.4 l1.6,2 l1.6,-2 l1.6,2 l1.6,-2 l1.6,2 l1.2,-2" fill="none" stroke="#b9c0cf" stroke-width=".9"/><path d="M3.4,16 l1.6,2 l1.6,-2 l1.6,2 l1.6,-2 l1.6,2 l1.2,-2" fill="none" stroke="#b9c0cf" stroke-width=".9"/><path d="M3.4,26.6 l1.6,2 l1.6,-2 l1.6,2 l1.6,-2 l1.6,2 l1.2,-2" fill="none" stroke="#b9c0cf" stroke-width=".9"/><path d="M18,-2.4 Q24,-5.4 28,-1" fill="none" stroke="#3f74e0" stroke-width="1.6"/><path d="M25,-2.4 L32.4,.2 L27.4,5.6 Z" fill="#3f74e0"/><path d="M16.4,14.8 H21 V11.6 L25.6,17 L21,22.4 V19.2 H16.4 Z" fill="#3f74e0"/><path d="M18,37 Q24,40 28,35.6" fill="none" stroke="#3f74e0" stroke-width="1.6"/><path d="M25,37 L32.4,34.4 L27.4,29 Z" fill="#3f74e0"/><rect x="28.4" y="11.2" width="16" height="11" fill="#f4593c" stroke="#d8401f" stroke-width=".9"/><path d="M31,15.6 l1.8,2.2 l1.8,-2.2 l1.8,2.2 l1.8,-2.2 l1.8,2.2 l1.6,-2.2" fill="none" stroke="#ffb4a0" stroke-width="1"/></g>
<g transform="translate(1150.3,12.4)"><rect x=".6" y=".6" width="37.4" height="37.4" fill="#fbfcfe" stroke="#8794ad" stroke-width="1.2"/><path d="M8.1,1 V37.6 M1,8.1 H37.6" stroke="#a9b4c8" stroke-width="1.1"/><path d="M15.6,1 V37.6 M1,15.6 H37.6" stroke="#a9b4c8" stroke-width="1.1"/><path d="M23.1,1 V37.6 M1,23.1 H37.6" stroke="#a9b4c8" stroke-width="1.1"/><path d="M30.6,1 V37.6 M1,30.6 H37.6" stroke="#a9b4c8" stroke-width="1.1"/><rect x="7.4" y="7.4" width="8.2" height="8.2" fill="#f4593c" stroke="#e04a2a" stroke-width=".6"/><rect x="7.4" y="22.4" width="8.2" height="8.2" fill="#f4593c" stroke="#e04a2a" stroke-width=".6"/><path d="M11.6,6.6 Q13.6,3.6 17.4,4.4" fill="none" stroke="#55637e" stroke-width="1.3"/><path d="M16.4,2.6 L20,5.6 L16.6,7.4 Z" fill="#55637e"/><path d="M11.6,21.6 Q13.6,18.6 17.4,19.4" fill="none" stroke="#55637e" stroke-width="1.3"/><path d="M16.4,17.6 L20,20.6 L16.6,22.4 Z" fill="#55637e"/><text x="32.8" y="43" font-family="Liberation Serif,serif" font-weight="bold" font-size="55" text-anchor="middle" fill="#7cc872" stroke="#55a44c" stroke-width=".7">?</text></g>
<g transform="translate(1228.2,13.4)"><path transform="translate(0,0)" d="M.4,3.4 H6.4 V.2 L13.2,6.6 L6.4,13 V9.8 H.4 Z" fill="url(#ggrn)" stroke="#3f8f36" stroke-width=".9" stroke-linejoin="round"/><path d="M27,2.4 H19.2 V39.4 H27" fill="none" stroke="#50607a" stroke-width="1.9"/><rect x="12.8" y="13.8" width="12.200000000000001" height="12.8" fill="#fbfcfe" stroke="#76849e" stroke-width="1.6"/><path d="M15.3,20.2 H22.5 M18.9,16.6 V23.8" stroke="#3f4d66" stroke-width="1.5"/><rect x="29.8" y="2.5999999999999996" width="14.4" height="38.6" fill="#5d6b86" opacity=".22"/><rect x="28.8" y="1.4" width="14.4" height="38.6" fill="#f8fafd" stroke="#76849e" stroke-width="1.5"/><path d="M28.8,9.1 H43.2" stroke="#8a96ae" stroke-width="1.2"/><path d="M28.8,16.8 H43.2" stroke="#8a96ae" stroke-width="1.2"/><path d="M28.8,24.6 H43.2" stroke="#8a96ae" stroke-width="1.2"/><path d="M28.8,32.3 H43.2" stroke="#8a96ae" stroke-width="1.2"/><path d="M33.0,5.3 h6" stroke="#4d86f0" stroke-width="1.5"/><path d="M33.0,13.0 h6" stroke="#4d86f0" stroke-width="1.5"/><path d="M33.0,20.7 h6" stroke="#4d86f0" stroke-width="1.5"/><path d="M33.0,28.4 h6" stroke="#4d86f0" stroke-width="1.5"/><path d="M33.0,36.1 h6" stroke="#4d86f0" stroke-width="1.5"/></g>
<g transform="translate(1290.3,13.4)"><path transform="translate(13.4,0) scale(-1,1)" d="M.4,3.4 H6.4 V.2 L13.2,6.6 L6.4,13 V9.8 H.4 Z" fill="url(#ggrn)" stroke="#3f8f36" stroke-width=".9" stroke-linejoin="round"/><path d="M27,2.4 H19.2 V39.4 H27" fill="none" stroke="#50607a" stroke-width="1.9"/><rect x="12.8" y="13.8" width="12.200000000000001" height="12.8" fill="#fbfcfe" stroke="#76849e" stroke-width="1.6"/><path d="M11.6,27.2 L25.6,12.8" stroke="#f05030" stroke-width="2" stroke-linecap="round"/><rect x="29.8" y="2.5999999999999996" width="14.4" height="38.6" fill="#5d6b86" opacity=".22"/><rect x="28.8" y="1.4" width="14.4" height="38.6" fill="#f8fafd" stroke="#76849e" stroke-width="1.5"/><path d="M28.8,9.1 H43.2" stroke="#8a96ae" stroke-width="1.2"/><path d="M28.8,16.8 H43.2" stroke="#8a96ae" stroke-width="1.2"/><path d="M28.8,24.6 H43.2" stroke="#8a96ae" stroke-width="1.2"/><path d="M28.8,32.3 H43.2" stroke="#8a96ae" stroke-width="1.2"/><path d="M33.0,5.3 h6" stroke="#4d86f0" stroke-width="1.5"/><path d="M33.0,13.0 h6" stroke="#4d86f0" stroke-width="1.5"/><path d="M33.0,20.7 h6" stroke="#4d86f0" stroke-width="1.5"/><path d="M33.0,28.4 h6" stroke="#4d86f0" stroke-width="1.5"/><path d="M33.0,36.1 h6" stroke="#4d86f0" stroke-width="1.5"/></g>
<g transform="translate(1354.2,14.4)"><path d="M14.6,1.6 H6.4 V10 M6.6,22 V27" fill="none" stroke="#50607a" stroke-width="1.9"/><rect x="0.8" y="10.200000000000001" width="11.6" height="12.200000000000001" fill="#fbfcfe" stroke="#76849e" stroke-width="1.6"/><path d="M3.0,16.3 H10.2 M6.6,12.7 V19.9" stroke="#3f4d66" stroke-width="1.5"/><rect x="0.8" y="26.8" width="11.6" height="12.0" fill="#fbfcfe" stroke="#76849e" stroke-width="1.6"/><path d="M3.0,32.8 H10.2 M6.6,29.2 V36.4" stroke="#3f4d66" stroke-width="1.5"/><rect x="17.4" y="2.0" width="28" height="38.8" fill="#5d6b86" opacity=".22"/><rect x="16.4" y="0.8" width="28" height="38.8" fill="#f8fafd" stroke="#76849e" stroke-width="1.5"/><path d="M16.4,8.6 H44.4" stroke="#8a96ae" stroke-width="1.2"/><path d="M16.4,16.3 H44.4" stroke="#8a96ae" stroke-width="1.2"/><path d="M16.4,24.1 H44.4" stroke="#8a96ae" stroke-width="1.2"/><path d="M16.4,31.8 H44.4" stroke="#8a96ae" stroke-width="1.2"/><path d="M30.4,0.8 V39.599999999999994" stroke="#8a96ae" stroke-width="1.2"/><path d="M20.4,4.7 h6" stroke="#4d86f0" stroke-width="1.5"/><path d="M20.4,12.4 h6" stroke="#4d86f0" stroke-width="1.5"/><path d="M20.4,20.2 h6" stroke="#ff9410" stroke-width="1.5"/><path d="M34.4,20.2 h6" stroke="#ff9410" stroke-width="1.5"/><path d="M20.4,28.0 h6" stroke="#4d86f0" stroke-width="1.5"/><path d="M20.4,35.7 h6" stroke="#ff9410" stroke-width="1.5"/><path d="M34.4,35.7 h6" stroke="#ff9410" stroke-width="1.5"/></g>
<g transform="translate(1413.2,13)" opacity=".95"><path d="M3.6,0 H8 V3.8 H11.6 V8.2 H8 V12 H3.6 V8.2 H0 V3.8 H3.6 Z" fill="#a9b4c8"/><path d="M13,0.8 H22.2" stroke="#7f8fac" stroke-width="1.5" stroke-dasharray="1.4 .6"/><path d="M16,3.8 H22.2" stroke="#9fadc4" stroke-width="1.5" stroke-dasharray="1.4 .6"/><path d="M16,6.8 H22.2" stroke="#9fadc4" stroke-width="1.5" stroke-dasharray="1.4 .6"/><path d="M13,9.8 H22.2" stroke="#7f8fac" stroke-width="1.5" stroke-dasharray="1.4 .6"/><path d="M16,12.8 H22.2" stroke="#9fadc4" stroke-width="1.5" stroke-dasharray="1.4 .6"/><path d="M16,15.8 H22.2" stroke="#9fadc4" stroke-width="1.5" stroke-dasharray="1.4 .6"/><path d="M13,18.8 H22.2" stroke="#7f8fac" stroke-width="1.5" stroke-dasharray="1.4 .6"/></g>
<g transform="translate(1413.2,43.6)" opacity=".95"><rect x="0" y="0" width="11.6" height="6.4" fill="#a3afc4"/><path d="M13,0.8 H22.2" stroke="#7f8fac" stroke-width="1.5" stroke-dasharray="1.4 .6"/><path d="M16,3.8 H22.2" stroke="#9fadc4" stroke-width="1.5" stroke-dasharray="1.4 .6"/><path d="M16,6.8 H22.2" stroke="#9fadc4" stroke-width="1.5" stroke-dasharray="1.4 .6"/><path d="M13,9.8 H22.2" stroke="#7f8fac" stroke-width="1.5" stroke-dasharray="1.4 .6"/><path d="M16,12.8 H22.2" stroke="#9fadc4" stroke-width="1.5" stroke-dasharray="1.4 .6"/><path d="M16,15.8 H22.2" stroke="#9fadc4" stroke-width="1.5" stroke-dasharray="1.4 .6"/><path d="M13,18.8 H22.2" stroke="#7f8fac" stroke-width="1.5" stroke-dasharray="1.4 .6"/></g>
<g transform="translate(1512.6,113.6)"><path d="M.6,7.6 V.6 H7.6" fill="none" stroke="#6f86b0" stroke-width="1.2"/><path d="M1.8,9 V1.8 H9" fill="none" stroke="#fff" stroke-width="1" opacity=".9"/><path d="M4,4 L8,8" stroke="#5f78a8" stroke-width="1.3"/><path d="M9.6,5 V9.6 H5 Z" fill="#5f78a8"/><path d="M10.4,5 V10.4 H5" fill="none" stroke="#fff" stroke-width=".8" opacity=".9"/></g>
</svg>
<div id="fbar">
<span class="ft" style="left:71px;top:1px">A1</span>
<i style="left:187.5px;top:12px;width:0;height:0;border-left:6px solid transparent;border-right:6px solid transparent;border-top:6.5px solid #000"></i>
<div style="left:208px;top:-1px;width:121px;height:31px;border-radius:15px 0 0 15px;border:1px solid #84a2cc;border-right:1px solid #9fb7da;background:linear-gradient(#f6f9fd 0,#dbe6f5 35%,#bccfea 65%,#a3bee2 100%)"></div>
<i style="left:216px;top:9.5px;width:8px;height:8.5px;border-radius:4px;background:radial-gradient(circle at 35% 35%,#f4f4f4,#a8a8a8 70%,#c8c8c8)"></i>
<span style="left:302.5px;top:1px;font:italic bold 21px 'Liberation Serif',serif;color:#4d4d4d;line-height:26px;white-space:nowrap;letter-spacing:-1px">f<span style="position:static;font-size:16px;letter-spacing:0">x</span></span>
<span class="ft" style="left:340px;top:1px">Color</span>
</div>
<div id="fbline"></div>

<div id="grid">
<div class="corner"><i></i></div>
<div class="ch sel" style="left:26px;width:69px"><b>A</b></div>
<div class="ch sel" style="left:95px;width:112px"><b>B</b></div>
<div class="ch sel" style="left:207px;width:223px"><b>C</b></div>
<div class="ch sel" style="left:430px;width:189px"><b>D</b></div>
<div class="ch" style="left:619px;width:384px"><b>E</b></div>
<div class="ch" style="left:1003px;width:96px"><b>F</b></div>
<div class="ch" style="left:1099px;width:96px"><b>G</b></div>
<div class="ch" style="left:1195px;width:96px"><b>H</b></div>
<div class="ch" style="left:1291px;width:96px"><b>I</b></div>
<div class="ch" style="left:1387px;width:96px"><b>J</b></div>
<div class="ch" style="left:1483px;width:96px"><b>K</b></div>
<div class="ch" style="left:1579px;width:96px"><b>L</b></div>
<div class="rh" style="top:202px;height:62px"><span>1</span></div>
<div class="rh" style="top:264px;height:31px"><span>2</span></div>
<div class="rh" style="top:295px;height:31px"><span>3</span></div>
<div class="rh" style="top:326px;height:31px"><span>4</span></div>
<div class="rh" style="top:357px;height:31px"><span>5</span></div>
<div class="rh" style="top:388px;height:31px"><span>6</span></div>
<div class="rh" style="top:419px;height:31px"><span>7</span></div>
<div class="rh" style="top:450px;height:31px"><span>8</span></div>
<div class="rh" style="top:481px;height:31px"><span>9</span></div>
<div class="rh" style="top:512px;height:31px"><span>10</span></div>
<div class="rh" style="top:543px;height:31px"><span>11</span></div>
<div class="rh" style="top:574px;height:31px"><span>12</span></div>
<div class="rh" style="top:605px;height:31px"><span>13</span></div>
<div class="rh" style="top:636px;height:31px"><span>14</span></div>
<div class="rh" style="top:667px;height:31px"><span>15</span></div>
<div class="rh" style="top:698px;height:31px"><span>16</span></div>
<div class="vl" style="left:1002px"></div>
<div class="vl" style="left:1098px"></div>
<div class="vl" style="left:1194px"></div>
<div class="vl" style="left:1290px"></div>
<div class="vl" style="left:1386px"></div>
<div class="vl" style="left:1482px"></div>
<div class="vl" style="left:1578px"></div>
<div class="vl" style="left:1674px"></div>
<div class="hl" style="top:263px"></div>
<div class="hl" style="top:294px"></div>
<div class="hl" style="top:325px"></div>
<div class="hl" style="top:356px"></div>
<div class="hl" style="top:387px"></div>
<div class="hl" style="top:418px"></div>
<div class="hl" style="top:449px"></div>
<div class="hl" style="top:480px"></div>
<div class="hl" style="top:511px"></div>
<div class="hl" style="top:542px"></div>
<div class="hl" style="top:573px"></div>
<div class="hl" style="top:604px"></div>
<div class="hl" style="top:635px"></div>
<div class="hl" style="top:666px"></div>
<div class="hl" style="top:697px"></div>
<div class="hl" style="top:728px"></div>
<div class="selblk"></div><div class="hbase"></div>
<div class="hc a1"><span>Color</span></div>
<div class="hc b1"><span>Size</span></div>
<div class="hc c1"><span>Number of Units in<br>warehouse I</span></div>
<div class="hc d1"><span>Number of Units<br>in warehouse II</span></div>
<div class="svl" style="left:94px"></div>
<div class="svl" style="left:206px"></div>
<div class="svl" style="left:429px"></div>
<div class="shl" style="top:294px"></div>
<div class="shl" style="top:325px"></div>
<div class="shl" style="top:356px"></div>
<div class="shl" style="top:387px"></div>
<div class="shl" style="top:418px"></div>
<div class="shl" style="top:449px"></div>
<div class="shl" style="top:480px"></div>
<div class="shl" style="top:511px"></div>
<div class="shl" style="top:542px"></div>
<div class="shl" style="top:573px"></div>
<div class="shl" style="top:604px"></div>
<div class="shl" style="top:635px"></div>
<div class="shl" style="top:666px"></div>
<div class="shl" style="top:697px"></div>
<div class="shl" style="top:728px"></div>
<div class="c l" style="top:264px;left:27px;width:67px">Beige</div>
<div class="c r" style="top:264px;left:95px;width:111px">10</div>
<div class="c r" style="top:264px;left:207px;width:222px">100</div>
<div class="c r" style="top:264px;left:430px;width:186px;padding-right:1.3px">100</div>
<div class="c l" style="top:295px;left:27px;width:67px">Beige</div>
<div class="c r" style="top:295px;left:95px;width:111px">10</div>
<div class="c r" style="top:295px;left:207px;width:222px">60</div>
<div class="c r" style="top:295px;left:430px;width:186px;padding-right:1.3px">60</div>
<div class="c l" style="top:326px;left:27px;width:67px">Beige</div>
<div class="c r" style="top:326px;left:95px;width:111px">12</div>
<div class="c r" style="top:326px;left:207px;width:222px">70</div>
<div class="c r" style="top:326px;left:430px;width:186px;padding-right:1.3px">100</div>
<div class="c l" style="top:357px;left:27px;width:67px">Beige</div>
<div class="c r" style="top:357px;left:95px;width:111px">8</div>
<div class="c r" style="top:357px;left:207px;width:222px">180</div>
<div class="c r" style="top:357px;left:430px;width:186px;padding-right:1.3px">40</div>
<div class="c l" style="top:388px;left:27px;width:67px">Beige</div>
<div class="c r" style="top:388px;left:95px;width:111px">8</div>
<div class="c r" style="top:388px;left:207px;width:222px">60</div>
<div class="c r" style="top:388px;left:430px;width:186px;padding-right:1.3px">60</div>
<div class="c l" style="top:419px;left:27px;width:67px">Beige</div>
<div class="c r" style="top:419px;left:95px;width:111px">4</div>
<div class="c r" style="top:419px;left:207px;width:222px">60</div>
<div class="c r" style="top:419px;left:430px;width:186px;padding-right:1.3px">50</div>
<div class="c l" style="top:450px;left:27px;width:67px">Beige</div>
<div class="c r" style="top:450px;left:95px;width:111px">2</div>
<div class="c r" style="top:450px;left:207px;width:222px">20</div>
<div class="c r" style="top:450px;left:430px;width:186px;padding-right:1.3px">50</div>
<div class="c l" style="top:481px;left:27px;width:67px">Black</div>
<div class="c r" style="top:481px;left:95px;width:111px">4</div>
<div class="c r" style="top:481px;left:207px;width:222px">90</div>
<div class="c r" style="top:481px;left:430px;width:186px;padding-right:1.3px">90</div>
<div class="c l" style="top:512px;left:27px;width:67px">Black</div>
<div class="c r" style="top:512px;left:95px;width:111px">12</div>
<div class="c r" style="top:512px;left:207px;width:222px">120</div>
<div class="c r" style="top:512px;left:430px;width:186px;padding-right:1.3px">120</div>
<div class="c l" style="top:543px;left:27px;width:67px">Black</div>
<div class="c r" style="top:543px;left:95px;width:111px">8</div>
<div class="c r" style="top:543px;left:207px;width:222px">20</div>
<div class="c r" style="top:543px;left:430px;width:186px;padding-right:1.3px">20</div>
<div class="c l" style="top:574px;left:27px;width:67px">Black</div>
<div class="c r" style="top:574px;left:95px;width:111px">10</div>
<div class="c r" style="top:574px;left:207px;width:222px">90</div>
<div class="c r" style="top:574px;left:430px;width:186px;padding-right:1.3px">50</div>
<div class="c l" style="top:605px;left:27px;width:67px">Black</div>
<div class="c r" style="top:605px;left:95px;width:111px">4</div>
<div class="c r" style="top:605px;left:207px;width:222px">120</div>
<div class="c r" style="top:605px;left:430px;width:186px;padding-right:1.3px">20</div>
<div class="c l" style="top:636px;left:27px;width:67px">Black</div>
<div class="c r" style="top:636px;left:95px;width:111px">8</div>
<div class="c r" style="top:636px;left:207px;width:222px">40</div>
<div class="c r" style="top:636px;left:430px;width:186px;padding-right:1.3px">24</div>
<div class="c l" style="top:667px;left:27px;width:67px">Black</div>
<div class="c r" style="top:667px;left:95px;width:111px">10</div>
<div class="c r" style="top:667px;left:207px;width:222px">24</div>
<div class="c r" style="top:667px;left:430px;width:186px;padding-right:1.3px">40</div>
<div class="c l" style="top:698px;left:27px;width:67px">Green</div>
<div class="c r" style="top:698px;left:95px;width:111px">8</div>
<div class="c r" style="top:698px;left:207px;width:222px">90</div>
<div class="c r" style="top:698px;left:430px;width:186px;padding-right:1.3px">90</div>
<div class="tri" style="top:295px"></div>
<div class="tri" style="top:574px"></div>
<div class="tri" style="top:698px"></div>
<div class="selb l"></div><div class="selb r"></div><div class="selb r2"></div><div class="selb t"></div>
</div>
<div id="dlg">
<div class="tb"></div>
<span class="tt">Subtotal</span>
<span class="q">?</span>
<svg width="17" height="17" viewBox="0 0 17 17" style="left:342px;top:9px"><path d="M1.5,1.5 L15.5,15.5 M15.5,1.5 L1.5,15.5" stroke="#fff" stroke-width="1.2"/></svg>
<span class="lbl" style="top:47px"><u>A</u>t each change in:</span>
<div class="combo" style="top:70px"><span>Color</span><div class="btn"><svg width="12" height="7" viewBox="0 0 12 7" style="left:5.4px;top:10.6px"><path d="M.7,.8 L6,5.9 L11.3,.8" fill="none" stroke="#444" stroke-width="1.25"/></svg></div></div>
<span class="lbl" style="top:107px"><u>U</u>se function:</span>
<div class="combo" style="top:130px"><span style="letter-spacing:-.7px">Sum</span><div class="btn"><svg width="12" height="7" viewBox="0 0 12 7" style="left:5.4px;top:10.6px"><path d="M.7,.8 L6,5.9 L11.3,.8" fill="none" stroke="#444" stroke-width="1.25"/></svg></div></div>
<span class="lbl" style="top:167px">A<u>d</u>d subtotal to:</span>
<div class="list">
<div class="sb">
<svg width="14" height="10" viewBox="0 0 14 10" style="left:6px;top:10.6px"><path d="M1.4,8.6 L7,2.6 L12.6,8.6" fill="none" stroke="#c0c0c0" stroke-width="2.8"/></svg>
<svg width="14" height="10" viewBox="0 0 14 10" style="left:6px;top:102.6px"><path d="M1.4,1.4 L7,7.4 L12.6,1.4" fill="none" stroke="#c0c0c0" stroke-width="2.8"/></svg>
</div>
<div class="cb" style="left:2px;top:1px"></div><span class="li" style="top:1.6px">Color</span>
<div class="cb" style="left:2px;top:21px"></div><span class="li" style="top:21.6px;letter-spacing:-.9px">Size</span>
<div class="cb" style="left:2px;top:41px"></div><span class="li" style="top:41.6px">Number of Units in warehouse <em class="si">I</em></span>
<div class="selrow"></div>
<div class="cb foc" style="left:2px;top:61px"></div><svg width="19" height="19" viewBox="0 0 19 19" style="left:2px;top:61px"><path d="M3.8,9.9 L7.9,13.9 L15.6,5.8" fill="none" stroke="#262626" stroke-width="1.6"/></svg><span class="li" style="top:61.6px;color:#fff">Number of Units in warehouse <em class="si">II</em></span>
</div>
<div class="cb" style="left:9px;top:333px"></div><svg width="19" height="19" viewBox="0 0 19 19" style="left:9px;top:333px"><path d="M3.8,9.9 L7.9,13.9 L15.6,5.8" fill="none" stroke="#262626" stroke-width="1.6"/></svg><span class="ck" style="top:333.5px;letter-spacing:-.19px">Replace <u>c</u>urrent subtotals</span>
<div class="cb" style="left:9px;top:362px"></div><span class="ck" style="top:362.5px;letter-spacing:-.18px"><u>P</u>age break between groups</span>
<div class="cb" style="left:9px;top:391px"></div><svg width="19" height="19" viewBox="0 0 19 19" style="left:9px;top:391px"><path d="M3.8,9.9 L7.9,13.9 L15.6,5.8" fill="none" stroke="#262626" stroke-width="1.6"/></svg><span class="ck" style="top:391.5px;letter-spacing:-.05px"><u>S</u>ummary below data</span>
<div class="bt" style="left:9px"><u>R</u>emove All</div>
<div class="bt ok" style="left:136px;letter-spacing:-1.2px">OK</div>
<div class="bt" style="left:263px;letter-spacing:-.85px">Cancel</div>
</div>

</div>
</body>
</html>
